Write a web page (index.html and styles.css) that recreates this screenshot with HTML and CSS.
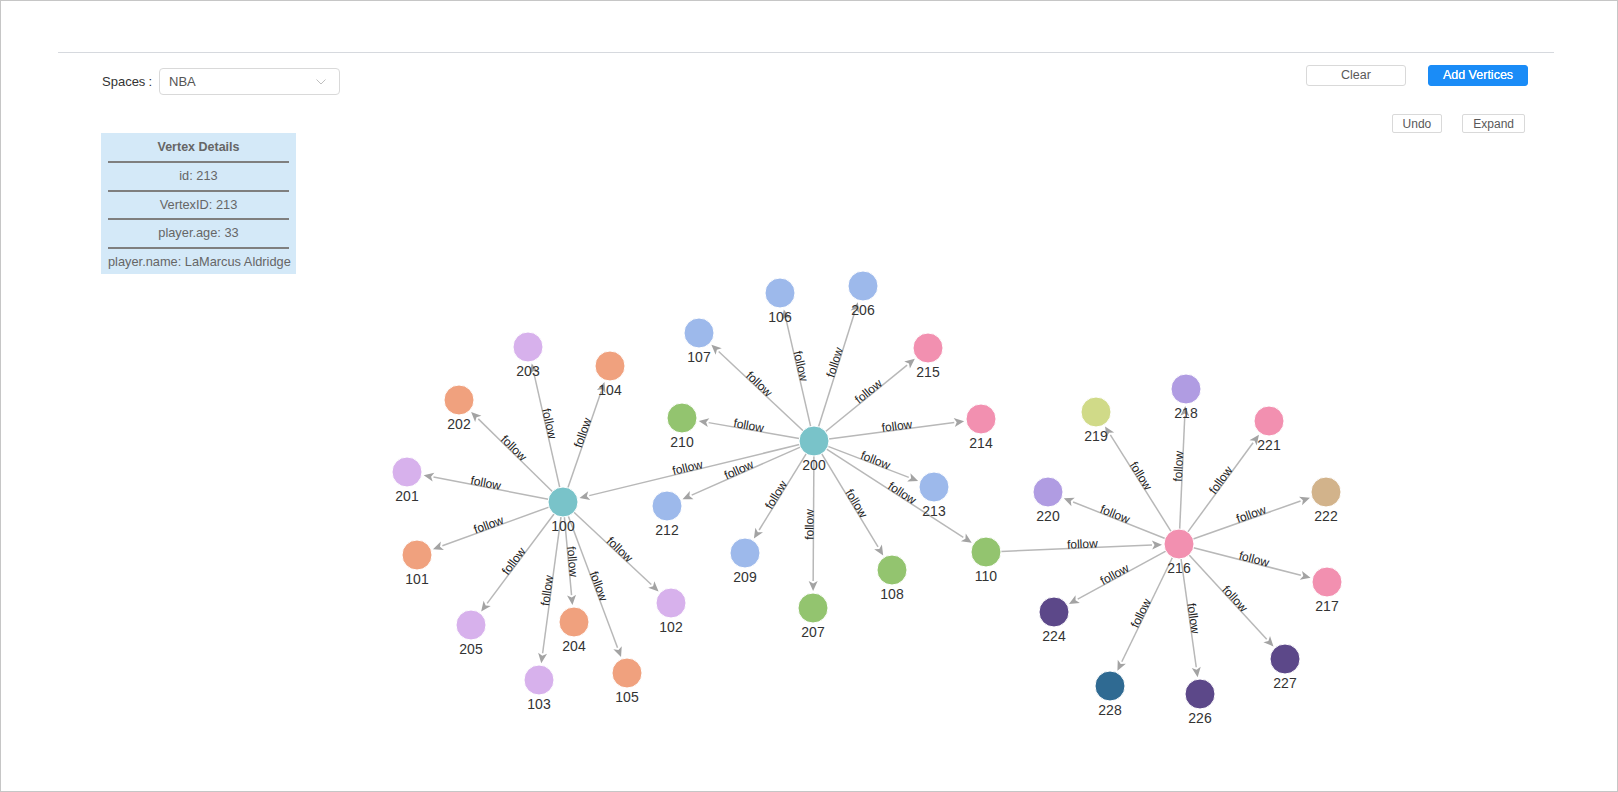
FILE: index.html
```html
<!DOCTYPE html>
<html>
<head>
<meta charset="utf-8">
<title>Explore</title>
<link rel="stylesheet" href="styles.css">
</head>
<body>
<div class="frame">
  <div class="topbar"></div>
  <div class="toolbar">
    <div class="space-field">
      <span class="field-label">Spaces</span><span class="colon">:</span>
      <div class="select">
        <span class="select-value">NBA</span>
        <svg class="chevron" width="10" height="6" viewBox="0 0 10 6"><path d="M0.5 0.5 L5 5 L9.5 0.5" fill="none" stroke="#bfbfbf" stroke-width="1"/></svg>
      </div>
    </div>
    <div class="actions">
      <button class="btn btn-wide">Clear</button>
      <button class="btn btn-wide btn-primary">Add Vertices</button>
    </div>
  </div>
  <div class="canvas">
    <svg id="graph" class="graph" width="1616" height="691" viewBox="1 100 1616 691"></svg>
    <div class="details">
      <div class="details-title">Vertex Details</div>
      <div class="sep"></div>
      <div class="details-row">id: 213</div>
      <div class="sep"></div>
      <div class="details-row">VertexID: 213</div>
      <div class="sep"></div>
      <div class="details-row">player.age: 33</div>
      <div class="sep"></div>
      <div class="details-row">player.name: LaMarcus Aldridge</div>
    </div>
    <div class="ops">
      <button class="btn btn-small">Undo</button>
      <button class="btn btn-small">Expand</button>
    </div>
  </div>
</div>
<script src="script.js"></script>
</body>
</html>
```
FILE: styles.css
```css
html, body {
  margin: 0;
  padding: 0;
  background: #ffffff;
  font-family: "Liberation Sans", Arial, sans-serif;
}

.frame {
  width: 1618px;
  height: 792px;
  box-sizing: border-box;
  border: 1px solid #c6c6c6;
  background: #ffffff;
  overflow: hidden;
}

.topbar {
  height: 51px;
  margin: 0 63px 0 57px;
  border-bottom: 1px solid #d6d9de;
}

.toolbar {
  height: 47px;
  display: flex;
  justify-content: space-between;
  align-items: flex-start;
  padding: 0 89px 0 101px;
}

.space-field {
  margin-top: 15px;
  display: flex;
  align-items: center;
  height: 27px;
  font-size: 13px;
  color: #333333;
}

.colon {
  margin: 0 7px 0 3px;
}

.select {
  width: 181px;
  height: 27px;
  box-sizing: border-box;
  border: 1px solid #d9d9d9;
  border-radius: 4px;
  display: flex;
  align-items: center;
  justify-content: space-between;
  padding: 0 13px 0 9px;
  color: #555555;
  font-size: 13px;
}

.chevron {
  display: block;
}

.actions {
  margin-top: 12px;
  display: flex;
  gap: 22px;
}

.btn {
  font-family: "Liberation Sans", Arial, sans-serif;
  background: #ffffff;
  border: 1px solid #d9d9d9;
  border-radius: 3px;
  color: #595959;
  box-sizing: border-box;
  padding: 0;
  margin: 0;
  line-height: 1;
}

.btn-wide {
  width: 100px;
  height: 21px;
  font-size: 12.5px;
}

.btn-primary {
  background: #1a8cf7;
  border-color: #1a8cf7;
  color: #ffffff;
  text-shadow: 0 0 0.4px #ffffff;
}

.canvas {
  position: relative;
  height: 691px;
}

.graph {
  display: block;
}

.edge-line {
  stroke: #b8b8b8;
  stroke-width: 1.5;
}

.edge-arrow {
  fill: #a3a3a3;
}

.edge-label {
  font-family: "Liberation Sans", Arial, sans-serif;
  font-size: 12px;
  fill: #222222;
}

.node-label {
  font-family: "Liberation Sans", Arial, sans-serif;
  font-size: 14px;
  fill: #333333;
}

.details {
  position: absolute;
  left: 100px;
  top: 33px;
  width: 195px;
  height: 141px;
  box-sizing: border-box;
  padding: 0 7px;
  background: #d4e9f8;
  text-align: center;
  color: #666666;
}

.details-title {
  height: 28px;
  line-height: 28px;
  font-size: 12.5px;
  font-weight: bold;
  color: #666666;
}

.sep {
  height: 2px;
  background: #7f7f7f;
}

.details-row {
  height: 26.5px;
  line-height: 26.5px;
  font-size: 12.8px;
  white-space: nowrap;
}

.ops {
  position: absolute;
  top: 14px;
  right: 92px;
  display: flex;
  gap: 20px;
}

.btn-small {
  height: 19px;
  padding: 0 10px;
  font-size: 12px;
  border-radius: 2px;
}
```
FILE: script.js
```js
(function () {
  var C = {
    teal: '#79c3c9', purple: '#d7b1ec', orange: '#f0a17e', blue: '#9db9eb',
    green: '#93c46f', pink: '#f290b0', lime: '#d0da88', lavender: '#b09ce2',
    tan: '#d2b38b', dpurple: '#5c4889', dblue: '#2f6a92'
  };
  var nodes = {
    '100': [563, 502, C.teal], '200': [814, 441, C.teal],
    '203': [528, 347, C.purple], '104': [610, 366, C.orange], '202': [459, 400, C.orange],
    '201': [407, 472, C.purple], '101': [417, 555, C.orange], '205': [471, 625, C.purple],
    '103': [539, 680, C.purple], '204': [574, 622, C.orange], '105': [627, 673, C.orange],
    '102': [671, 603, C.purple],
    '106': [780, 293, C.blue], '206': [863, 286, C.blue], '107': [699, 333, C.blue],
    '215': [928, 348, C.pink], '210': [682, 418, C.green], '214': [981, 419, C.pink],
    '212': [667, 506, C.blue], '209': [745, 553, C.blue], '207': [813, 608, C.green],
    '108': [892, 570, C.green], '213': [934, 487, C.blue], '110': [986, 552, C.green],
    '216': [1179, 544, C.pink], '219': [1096, 412, C.lime], '218': [1186, 389, C.lavender],
    '221': [1269, 421, C.pink], '220': [1048, 492, C.lavender], '222': [1326, 492, C.tan],
    '217': [1327, 582, C.pink], '224': [1054, 612, C.dpurple], '228': [1110, 686, C.dblue],
    '226': [1200, 694, C.dpurple], '227': [1285, 659, C.dpurple]
  };
  var edges = [];
  ['203','104','202','201','101','205','103','204','105','102'].forEach(function (t) { edges.push(['100', t]); });
  ['100','106','206','107','215','210','214','212','209','207','108','213','110'].forEach(function (t) { edges.push(['200', t]); });
  edges.push(['110', '216']);
  ['219','218','221','220','222','217','224','228','226','227'].forEach(function (t) { edges.push(['216', t]); });

  var NS = 'http://www.w3.org/2000/svg';
  var svg = document.getElementById('graph');
  function el(tag, attrs, parent) {
    var e = document.createElementNS(NS, tag);
    for (var k in attrs) e.setAttribute(k, attrs[k]);
    parent.appendChild(e);
    return e;
  }
  var gEdges = el('g', {}, svg);
  var gLabels = el('g', {}, svg);
  var gNodes = el('g', {}, svg);
  var R = 15;

  edges.forEach(function (e) {
    var s = nodes[e[0]], t = nodes[e[1]];
    var dx = t[0] - s[0], dy = t[1] - s[1];
    var len = Math.sqrt(dx * dx + dy * dy);
    var ux = dx / len, uy = dy / len;
    var px = -uy, py = ux;
    var sx = s[0] + ux * R, sy = s[1] + uy * R;
    var tipx = t[0] - ux * (R + 2), tipy = t[1] - uy * (R + 2);
    var bx = tipx - ux * 10, by = tipy - uy * 10;
    el('line', { x1: sx.toFixed(2), y1: sy.toFixed(2), x2: bx.toFixed(2), y2: by.toFixed(2), 'class': 'edge-line' }, gEdges);
    var pts = [
      [tipx, tipy],
      [bx + px * 4.5, by + py * 4.5],
      [bx + ux * 2.5, by + uy * 2.5],
      [bx - px * 4.5, by - py * 4.5]
    ].map(function (p) { return p[0].toFixed(2) + ',' + p[1].toFixed(2); }).join(' ');
    el('polygon', { points: pts, 'class': 'edge-arrow' }, gEdges);
    var mx = (s[0] + t[0]) / 2, my = (s[1] + t[1]) / 2;
    var ang = Math.atan2(dy, dx) * 180 / Math.PI;
    if (ang > 90) ang -= 180;
    if (ang < -90) ang += 180;
    var txt = el('text', {
      x: 0, y: 0, 'text-anchor': 'middle', 'class': 'edge-label',
      transform: 'translate(' + mx.toFixed(2) + ',' + my.toFixed(2) + ') rotate(' + ang.toFixed(2) + ')'
    }, gLabels);
    txt.textContent = 'follow';
  });

  Object.keys(nodes).forEach(function (id) {
    var n = nodes[id];
    el('circle', { cx: n[0], cy: n[1], r: R, fill: n[2], stroke: '#ffffff', 'stroke-width': 1 }, gNodes);
    var t = el('text', { x: n[0], y: n[1] + 29, 'text-anchor': 'middle', 'class': 'node-label' }, gNodes);
    t.textContent = id;
  });
})();
```
